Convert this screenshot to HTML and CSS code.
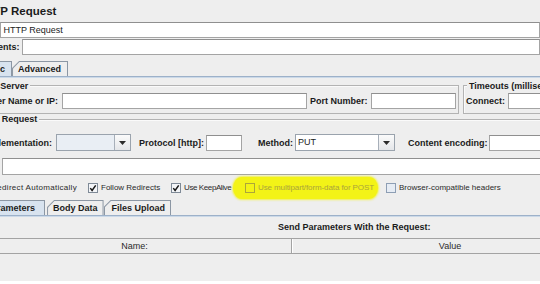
FILE: index.html
```html
<!DOCTYPE html>
<html lang="en">
<head>
<meta charset="utf-8">
<title>HTTP Request</title>
<link rel="stylesheet" href="styles.css">
</head>
<body>
<div class="page">
  <div class="title">HTTP Request</div>
  <div class="frow"><span class="flabel">Name:</span><div class="field grow">HTTP Request</div></div>
  <div class="frow comments"><span class="flabel">Comments:</span><div class="field grow"></div></div>
  <div class="tabstrip top">
    <div class="tab sel t-basic"><span>Basic</span></div>
    <div class="tab t-adv"><span>Advanced</span></div>
  </div>
  <div class="tabbody">
    <div class="panels">
      <div class="group ws">
        <div class="gtitle">Web Server</div>
        <div class="prow">
          <span class="lbl l-server">Server Name or IP:</span>
          <div class="field f-server"></div>
          <span class="lbl l-port">Port Number:</span>
          <div class="field f-port"></div>
        </div>
      </div>
      <div class="group to">
        <div class="gtitle">Timeouts (milliseconds)</div>
        <div class="prow">
          <span class="lbl l-connect">Connect:</span>
          <div class="field f-connect"></div>
        </div>
      </div>
    </div>
    <div class="group http">
      <div class="gtitle">HTTP Request</div>
      <div class="prow impl">
        <span class="lbl l-impl">Implementation:</span>
        <div class="combo c-impl"><div class="cval"></div><div class="carrow"><svg width="7" height="4" viewBox="0 0 7 4"><path d="M0 0H7L3.5 4Z" fill="#2b2b2b"/></svg></div></div>
        <span class="lbl l-proto">Protocol [http]:</span>
        <div class="field f-proto"></div>
        <span class="lbl l-method">Method:</span>
        <div class="combo c-method"><div class="cval">PUT</div><div class="carrow"><svg width="7" height="4" viewBox="0 0 7 4"><path d="M0 0H7L3.5 4Z" fill="#2b2b2b"/></svg></div></div>
        <span class="lbl l-enc">Content encoding:</span>
        <div class="field f-enc"></div>
      </div>
      <div class="prow path">
        <span class="lbl l-path">Path:</span>
        <div class="field grow"></div>
      </div>
      <div class="checks">
        <div class="chk c1"><svg width="10" height="10" viewBox="0 0 10 10"><rect x="0.5" y="0.5" width="9" height="9" fill="#f3f5f8" stroke="#8793a1"/></svg><span>Redirect Automatically</span></div>
        <div class="chk c2"><svg width="10" height="10" viewBox="0 0 10 10"><rect x="0.5" y="0.5" width="9" height="9" fill="#f3f5f8" stroke="#7f8a97"/><path d="M2.3 5.1 4.1 7.4 7.7 2.4" fill="none" stroke="#151515" stroke-width="1.5"/></svg><span>Follow Redirects</span></div>
        <div class="chk c3"><svg width="10" height="10" viewBox="0 0 10 10"><rect x="0.5" y="0.5" width="9" height="9" fill="#f3f5f8" stroke="#7f8a97"/><path d="M2.3 5.1 4.1 7.4 7.7 2.4" fill="none" stroke="#151515" stroke-width="1.5"/></svg><span>Use KeepAlive</span></div>
        <div class="chk c4"><svg width="10" height="10" viewBox="0 0 10 10"><rect x="0.5" y="0.5" width="9" height="9" fill="none" stroke="#aca63a"/></svg><span>Use multipart/form-data for POST</span></div>
        <div class="chk c5"><svg width="10" height="10" viewBox="0 0 10 10"><rect x="0.5" y="0.5" width="9" height="9" fill="#e6ecf4" stroke="#8d9eb4"/></svg><span>Browser-compatible headers</span></div>
      </div>
      <div class="tabstrip sub">
        <div class="tab sel t-params"><span>Parameters</span></div>
        <div class="tab t-body"><span>Body Data</span></div>
        <div class="tab t-files"><span>Files Upload</span></div>
      </div>
      <div class="params">
        <div class="ptitle">Send Parameters With the Request:</div>
        <div class="thead"><div class="th th-name">Name:</div><div class="th th-value">Value</div></div>
        <div class="tbody"></div>
        <div class="tail"></div>
      </div>
    </div>
  </div>
</div>
</body>
</html>
```
FILE: styles.css
```css
* { box-sizing: border-box; margin: 0; padding: 0; }
html, body { background: #eeeeee; }
body {
  width: 540px; height: 284px; overflow: hidden;
  font-family: "Liberation Sans", Arial, sans-serif; color: #1b1b1b;
}
.page { width: 540px; height: 284px; overflow: hidden; background: #eeeeee; }

.title {
  height: 22px; padding-top: 5px; margin-left: -22px;
  font-weight: bold; font-size: 11.5px; line-height: 13px; white-space: nowrap;
}

.frow { display: flex; align-items: center; height: 16px; margin-left: -30px; width: 570px; }
.frow.comments { margin-top: 1px; }
.flabel { font-weight: bold; font-size: 9px; margin-right: 2px; white-space: nowrap; }

.field {
  height: 16px; border: 1px solid #a4a4a4; border-top-color: #8f8f8f; background: #fff;
  font-size: 9px; line-height: 14px; padding-left: 3px; white-space: nowrap; flex-shrink: 0;
}
.grow { flex: 1; }

/* tabs */
.tabstrip { display: flex; align-items: flex-end; height: 16px; border-bottom: 1px solid #9db1c9; }
.tabstrip.top { margin: 6px 0 0 -27px; width: 600px; }
.tab {
  height: 15px; padding: 1px 1px 0 1px; background: #8c97a4; flex-shrink: 0;
  clip-path: polygon(0 7px, 7px 0, 100% 0, 100% 100%, 0 100%);
}
.tab span {
  display: block; height: 14px; background: #eeeeee;
  clip-path: polygon(0 6.4px, 6.4px 0, 100% 0, 100% 100%, 0 100%);
  font-size: 9px; font-weight: bold; line-height: 13px; padding-top: 1px; white-space: nowrap;
}
.tab.sel span { background: #d8e3ef; }
.t-basic span { padding-left: 7px; padding-right: 6px; }
.t-adv span { padding-left: 5px; padding-right: 6px; }
.t-params span { padding-left: 7px; padding-right: 9px; }
.t-body { margin-left: 2px; }
.t-body span { padding-left: 5px; padding-right: 5px; }
.t-files span { padding-left: 7px; padding-right: 5px; }

.tabbody { margin-left: -40px; width: 660px; border-top: 1px solid #cbd9e8; }

/* titled groups */
.group { border: 1px solid #b3b3b3; box-shadow: inset 1px 1px 0 #fafafa; }
.gtitle {
  width: fit-content; font-weight: bold; font-size: 9px; line-height: 11px;
  background: #eeeeee; padding: 0 2px; white-space: nowrap;
}
.panels { display: flex; margin-top: 7px; }
.ws { width: 499px; flex-shrink: 0; padding: 0 2px 4px 0; }
.ws .gtitle { margin: -5px 0 0 16px; }
.to { flex: 1; margin-left: 4px; padding: 0 0 4px 2px; }
.to .gtitle { margin: -5px 0 0 1px; }

.prow { display: flex; align-items: center; white-space: nowrap; }
.ws .prow, .to .prow { margin-top: 1px; height: 16px; }
.lbl { font-weight: bold; font-size: 9px; flex-shrink: 0; white-space: nowrap; }
.l-server { width: 97px; text-align: right; }
.f-server { margin-left: 4px; width: 245px; }
.l-port { margin-left: 3px; width: 58px; }
.f-port { margin-left: 3px; width: 85px; }
.l-connect { width: 39px; }
.f-connect { margin-left: 3px; width: 100px; }

.http { margin-top: 5px; border-bottom: none; border-right: none; }
.http .gtitle { margin: -6px 0 0 13px; }

.impl { margin-top: 9px; height: 17px; }
.l-impl { width: 91px; text-align: right; }
.combo { display: flex; height: 17px; border: 1px solid #9aa3ad; background: #fff; flex-shrink: 0; }
.cval { flex: 1; font-size: 9px; line-height: 15px; padding-left: 2px; }
.c-impl .cval { background: #e9eef4; }
.carrow {
  width: 16px; border-left: 1px solid #a7afb9;
  background: linear-gradient(#fbfbfb, #e4e6e9);
  display: flex; align-items: center; justify-content: center;
}
.c-impl { margin-left: 4px; width: 75px; }
.l-proto { margin-left: 8px; width: 65px; }
.f-proto { margin-left: 2px; width: 36px; }
.l-method { margin-left: 16px; width: 35px; }
.c-method { margin-left: 2px; width: 100px; }
.l-enc { margin-left: 13px; width: 79px; }
.f-enc { margin-left: 2px; width: 150px; }

.path { margin-top: 7px; height: 17px; }
.path .field { height: 17px; }
.l-path { width: 38px; text-align: right; }
.path .field { margin-left: 3px; }

/* checkboxes */
.checks {
  display: flex; align-items: center; height: 16px; margin-top: 5px;
  font-size: 8px; color: #2a2a2a; white-space: nowrap;
}
.chk { display: flex; align-items: center; flex-shrink: 0; }
.chk svg { flex-shrink: 0; display: block; }
.chk span { margin-left: 3px; line-height: 10px; }
.c1 span { display: block; width: 103px; text-align: right; letter-spacing: 0.3px; }
.c2 { margin-left: 11px; }
.c2 span { display: block; width: 59px; }
.c3 { margin-left: 11px; }
.c3 span { display: block; width: 48px; letter-spacing: -0.4px; }
.c4 {
  margin: -6px -4px -6px 1px; padding: 6px 4px 6px 12px;
  background: #f3f317; border-radius: 9px / 11px;
  box-shadow: 0 0 2px 1px rgba(243, 243, 23, 0.75);
  color: #aaa43c; letter-spacing: -0.1px;
}
.c5 { margin-left: 12px; }

.tabstrip.sub { margin-top: 4px; padding-left: 17px; }

.params { border-top: 1px solid #cbd9e8; }
.ptitle { margin: 5px 0 0 317px; font-weight: bold; font-size: 9px; line-height: 11px; white-space: nowrap; }
.thead {
  display: flex; margin: 5px 0 0 17px; width: 630px; height: 16px;
  border-top: 1px solid #a3a3a3; border-bottom: 1px solid #a3a3a3;
}
.th { font-size: 9px; line-height: 14px; text-align: center; color: #2a2a2a; }
.th-name { width: 314px; border-right: 1px solid #a3a3a3; box-shadow: 1px 0 0 #ffffff; }
.th-value { flex: 1; }
.tbody { height: 27px; }
.tail { height: 12px; background: #ffffff; }
```
